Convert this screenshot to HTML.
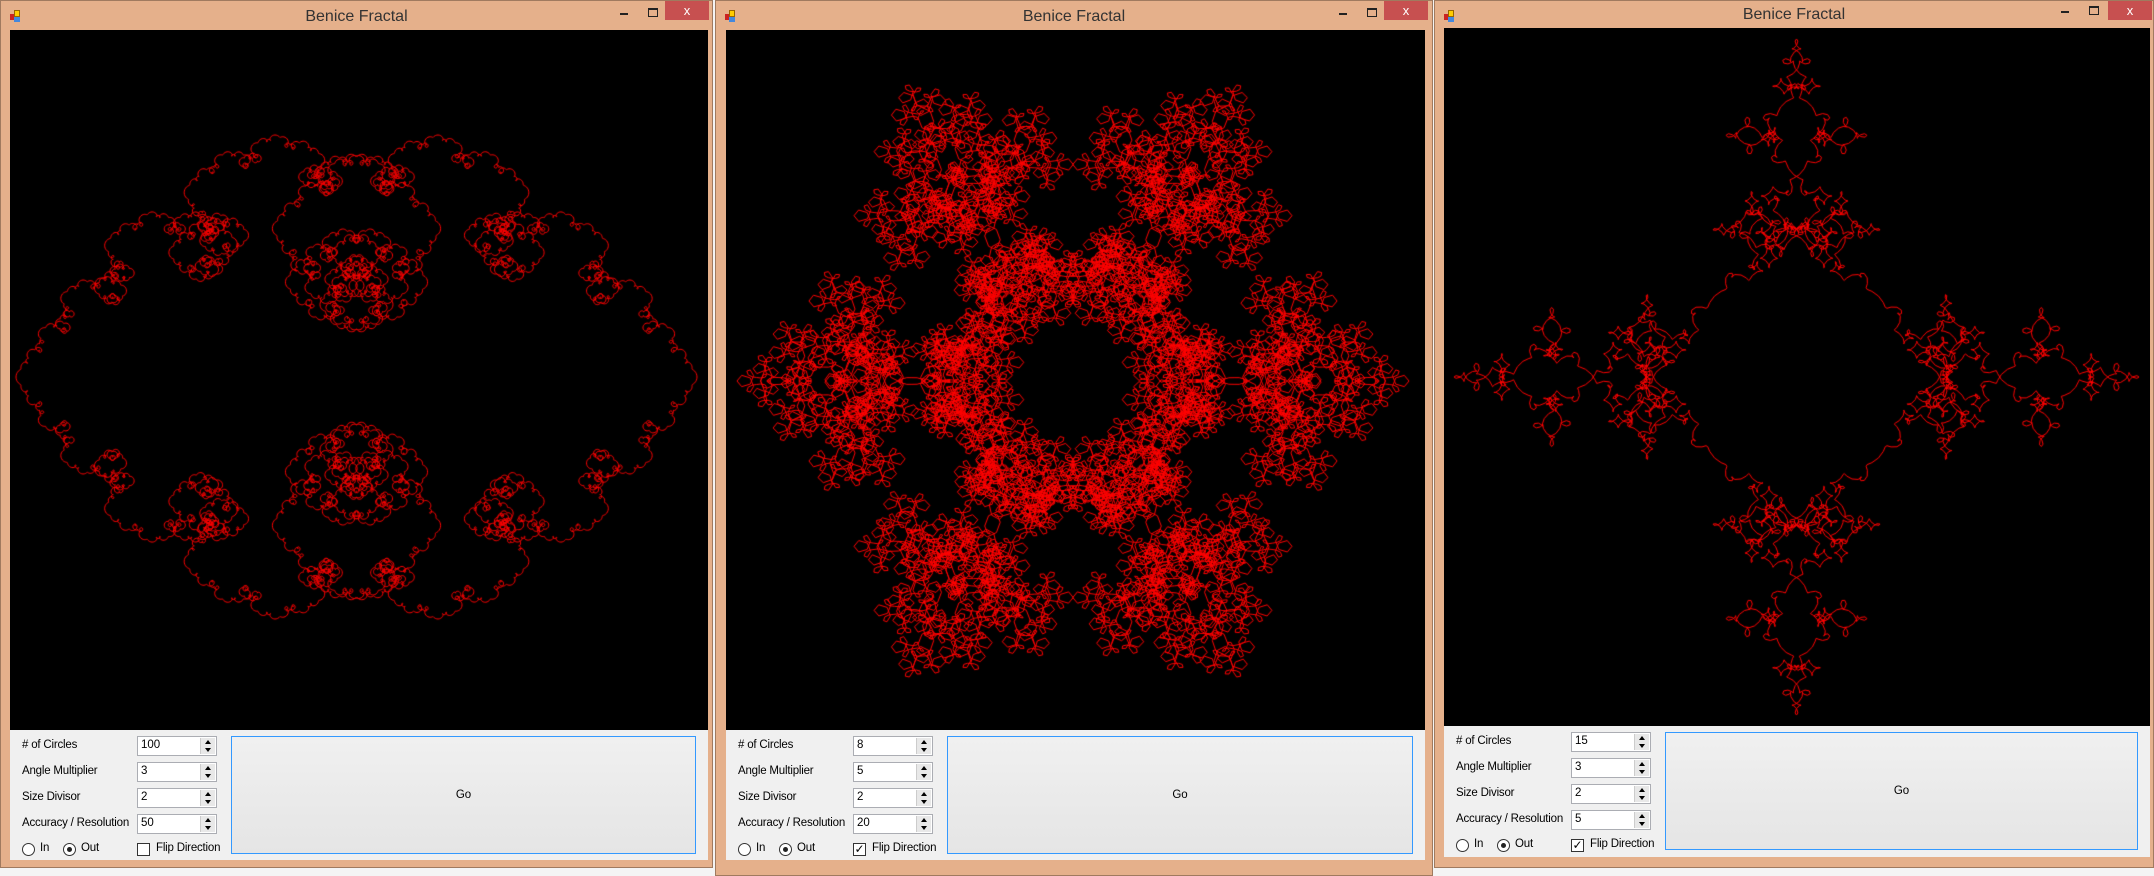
<!DOCTYPE html>
<html><head><meta charset="utf-8">
<style>
*{margin:0;padding:0;box-sizing:border-box}
body{width:2154px;height:872px;overflow:hidden;background:#f4f4f4;position:relative;font-family:"Liberation Sans",sans-serif;}
.win{position:absolute;background:#e5b08b;border:1px solid #a07a5f;}
.title{position:absolute;left:0;right:0;top:7px;text-align:center;font-size:16px;color:#333;}
.ico{position:absolute;left:9px;top:9px;width:10px;height:12px}
.ico i{position:absolute;display:block}
.cls{position:absolute;top:0;width:44px;height:19px;background:#c75050;color:#fff;text-align:center;font-size:13px;line-height:19px}
.min{position:absolute;top:12px;width:8px;height:2px;background:#222}
.max{position:absolute;top:7px;width:10px;height:9px;border:1px solid #222;border-top-width:2px}
canvas{position:absolute;background:#000;display:block}
.panel{position:absolute;background:#f0f0f0}
.lbl{position:absolute;font-size:11.5px;color:#000;letter-spacing:-0.2px}
.inp{position:absolute;width:80px;height:20px;border:1px solid #abadb3;background:#fff;font-size:11.5px;padding:2px 3px;}
.sp{position:absolute;right:1px;top:1px;width:15px;height:16px;background:#e8e8e8;border-left:1px solid #ccc}
.sp:before{content:"";position:absolute;left:4px;top:2px;border:3px solid transparent;border-bottom:4px solid #000;border-top:0}
.sp:after{content:"";position:absolute;left:4px;top:10px;border:3px solid transparent;border-top:4px solid #000;border-bottom:0}
.go{position:absolute;border:1px solid #3399ff;background:linear-gradient(#f0f0f0,#e5e5e5);font-size:11.5px;display:flex;align-items:center;justify-content:center}
.rad{position:absolute;width:13px;height:13px;border-radius:50%;border:1px solid #333;background:#fff}
.rad.on:after{content:"";position:absolute;left:3px;top:3px;width:5px;height:5px;border-radius:50%;background:#222}
.chk{position:absolute;width:13px;height:13px;border:1px solid #333;background:#fff;font-size:12px;line-height:11px;text-align:center}
</style></head><body>

<div class="win" style="left:0;top:0;width:713px;height:868px">
 <div class="ico"><i style="left:0;top:4px;width:4px;height:6px;background:#c22"></i><i style="left:4px;top:0;width:6px;height:7px;background:#fc0;border:1px solid #960"></i><i style="left:4px;top:7px;width:6px;height:5px;background:#48d"></i></div>
 <div class="title">Benice Fractal</div>
 <div class="min" style="left:619px"></div><div class="max" style="left:647px"></div><div class="cls" style="left:664px">x</div>
</div>
<div class="win" style="left:715px;top:0;width:718px;height:876px">
 <div class="ico"><i style="left:0;top:4px;width:4px;height:6px;background:#c22"></i><i style="left:4px;top:0;width:6px;height:7px;background:#fc0;border:1px solid #960"></i><i style="left:4px;top:7px;width:6px;height:5px;background:#48d"></i></div>
 <div class="title">Benice Fractal</div>
 <div class="min" style="left:623px"></div><div class="max" style="left:651px"></div><div class="cls" style="left:668px">x</div>
</div>
<div class="win" style="left:1434px;top:0;width:720px;height:868px">
 <div class="ico"><i style="left:0;top:4px;width:4px;height:6px;background:#c22"></i><i style="left:4px;top:0;width:6px;height:7px;background:#fc0;border:1px solid #960"></i><i style="left:4px;top:7px;width:6px;height:5px;background:#48d"></i></div>
 <div class="title" style="top:5px">Benice Fractal</div>
 <div class="min" style="left:626px;top:10px"></div><div class="max" style="left:654px;top:5px"></div><div class="cls" style="left:673px">x</div>
</div>

<canvas id="c1" width="698" height="700" style="left:10px;top:30px"></canvas>
<canvas id="c2" width="699" height="700" style="left:726px;top:30px"></canvas>
<canvas id="c3" width="706" height="698" style="left:1444px;top:28px"></canvas>

<div id="panels"></div>

<script>
function panel(x,y,w,h,vals,flip){
 var p='<div class="panel" style="left:'+x+'px;top:'+y+'px;width:'+w+'px;height:'+h+'px"></div>';
 var L=["# of Circles","Angle Multiplier","Size Divisor","Accuracy / Resolution"];
 for(var i=0;i<4;i++){
  var yy=y+6+i*26;
  p+='<div class="lbl" style="left:'+(x+12)+'px;top:'+(yy+3)+'px">'+L[i]+'</div>';
  p+='<div class="inp" style="left:'+(x+127)+'px;top:'+yy+'px">'+vals[i]+'<div class="sp"></div></div>';
 }
 var ry=y+113;
 p+='<div class="rad" style="left:'+(x+12)+'px;top:'+ry+'px"></div><div class="lbl" style="left:'+(x+30)+'px;top:'+(ry-1)+'px">In</div>';
 p+='<div class="rad on" style="left:'+(x+53)+'px;top:'+ry+'px"></div><div class="lbl" style="left:'+(x+71)+'px;top:'+(ry-1)+'px">Out</div>';
 p+='<div class="chk" style="left:'+(x+127)+'px;top:'+ry+'px">'+(flip?'✓':'')+'</div><div class="lbl" style="left:'+(x+146)+'px;top:'+(ry-1)+'px">Flip Direction</div>';
 p+='<div class="go" style="left:'+(x+221)+'px;top:'+(y+6)+'px;width:'+(w-233)+'px;height:118px">Go</div>';
 return p;
}
document.getElementById('panels').innerHTML=
 panel(10,730,698,130,[100,3,2,50],false)+
 panel(726,730,699,130,[8,5,2,20],true)+
 panel(1444,726,706,131,[15,3,2,5],true);

function frac(id,N,cap,m,d,flip,bx0,by0,bx1,by1,M){
 var c=document.getElementById(id),g=c.getContext('2d');
 g.fillStyle='#000';g.fillRect(0,0,c.width,c.height);
 N=Math.min(N,cap);
 var pw=[],r=[],s=[];
 for(var k=0;k<N;k++){pw.push(Math.pow(m,k)%M);r.push(Math.pow(1/d,k));s.push(flip&&(k%2)?-1:1);}
 var xs=new Float32Array(M+1),ys=new Float32Array(M+1);
 var mnx=1e9,mxx=-1e9,mny=1e9,mxy=-1e9;
 for(var j=0;j<=M;j++){
  var x=0,y=0;
  for(var k=0;k<N;k++){var a=2*Math.PI*((pw[k]*j)%M)/M*s[k];x+=r[k]*Math.cos(a);y+=r[k]*Math.sin(a);}
  xs[j]=x;ys[j]=y;
  if(x<mnx)mnx=x;if(x>mxx)mxx=x;if(y<mny)mny=y;if(y>mxy)mxy=y;
 }
 var sx=(bx1-bx0)/(mxx-mnx),sy=(by1-by0)/(mxy-mny);
 g.strokeStyle='#ff0000';g.lineWidth=1;g.beginPath();
 for(var j=0;j<=M;j++){
  var px=bx0+(xs[j]-mnx)*sx,py=by0+(ys[j]-mny)*sy;
  if(j==0)g.moveTo(px,py);else g.lineTo(px,py);
 }
 g.stroke();
}
frac('c1',100,8,3,2,false,6,105,687,589,30000);
frac('c2',8,7,5,2,true,11,55,683,647,20000);
frac('c3',15,7,3,2,true,10,11,695,687,4000);
</script>
</body></html>
